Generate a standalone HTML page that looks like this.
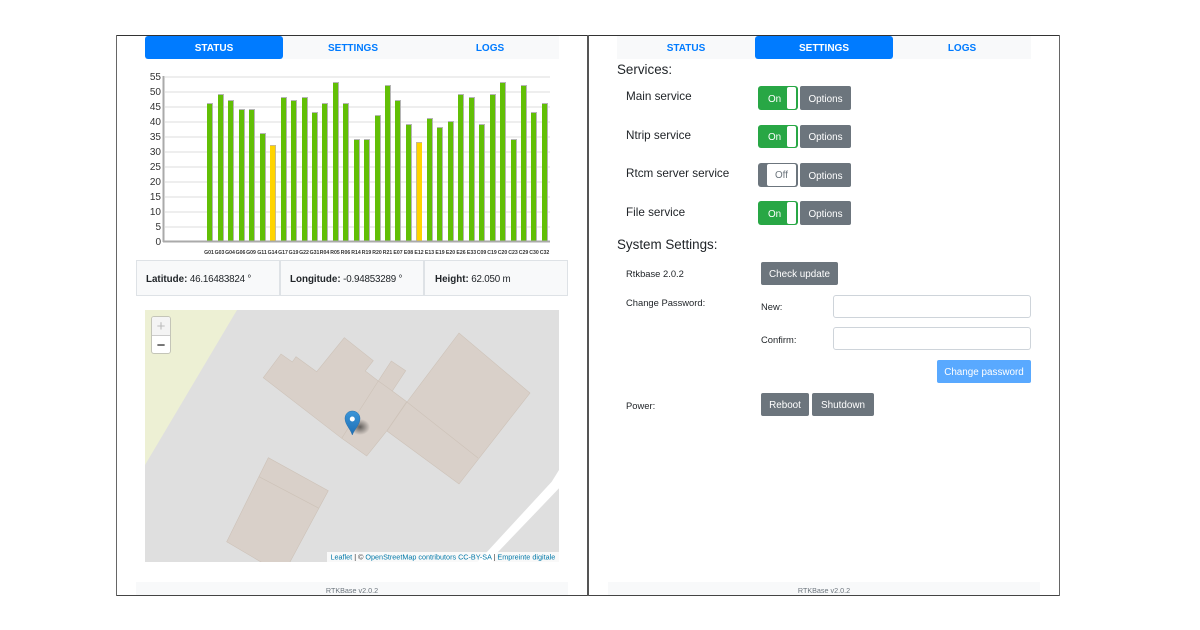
<!DOCTYPE html>
<html><head><meta charset="utf-8"><style>
html,body{margin:0;padding:0;background:#fff;width:1200px;height:630px;overflow:hidden}
body{position:relative;font-family:"Liberation Sans",sans-serif;color:#212529}
.a{position:absolute;white-space:nowrap}
.tab{position:absolute;top:36px;height:23px;line-height:25px;text-align:center;font-size:10px;font-weight:bold;color:#007bff}
.on{background:#007bff;color:#fff;border-radius:3px}
.btn{position:absolute;background:#6c757d;color:#fff;font-size:9.9px;text-align:center;border-radius:2px;height:23px;line-height:25px;overflow:hidden}
.lab{position:absolute;font-size:11.7px;white-space:nowrap;line-height:14px;color:#212529}
.sm{position:absolute;font-size:9.4px;white-space:nowrap;line-height:12px;color:#212529}
.h{position:absolute;font-size:13.4px;white-space:nowrap;line-height:16px;color:#212529}
.tg{position:absolute;left:758px;width:40px;height:24px;background:#28a745;border-radius:3px;color:#fff;font-size:9.9px;line-height:27px;overflow:hidden}
.tg i{position:absolute;left:29px;top:1px;width:9px;height:22px;background:#fff;border-radius:2px}
.tg span{position:absolute;left:10px;top:0}
.inp{position:absolute;left:833px;width:196px;height:21px;border:1px solid #ced4da;border-radius:3px;background:#fff}
.cell{position:absolute;top:260px;height:34px;line-height:37px;background:#f8f9fa;border:1px solid #dee2e6;font-size:9.8px;white-space:nowrap;width:142px;letter-spacing:-.2px}
.cell b{margin-left:9px;letter-spacing:0}
.foot{position:absolute;top:582px;height:13px;background:#f8f9fa;font-size:7.2px;line-height:17px;text-align:center;color:#6c757d;width:432px;overflow:hidden}
</style></head><body>

<!-- frame lines -->
<div class="a" style="left:116px;top:35px;width:944px;height:1px;background:#333"></div>
<div class="a" style="left:116px;top:595px;width:944px;height:1px;background:#444"></div>
<div class="a" style="left:116px;top:35px;width:1px;height:561px;background:#666"></div>
<div class="a" style="left:587px;top:35px;width:2px;height:561px;background:#555"></div>
<div class="a" style="left:1059px;top:35px;width:1px;height:561px;background:#666"></div>

<!-- left tabs -->
<div class="a" style="left:145px;top:36px;width:414px;height:23px;background:#f8f9fa"></div>
<div class="tab on" style="left:145px;width:138px">STATUS</div>
<div class="tab" style="left:283px;width:140px">SETTINGS</div>
<div class="tab" style="left:421px;width:138px">LOGS</div>

<!-- chart -->
<svg class="a" style="left:136px;top:66px" width="432" height="194" viewBox="136 66 432 194">
<g stroke="#eeeeee" stroke-width="2">
<path d="M165 77H550M165 92H550M165 107H550M165 122H550M165 137H550M165 152H550M165 167H550M165 182H550M165 197H550M165 212H550M165 227H550"/>
</g>
<g font-family="Liberation Sans,sans-serif" font-size="10" fill="#333" text-anchor="end">
<text x="161" y="80">55</text><text x="161" y="95">50</text><text x="161" y="110">45</text><text x="161" y="125">40</text><text x="161" y="140">35</text><text x="161" y="155">30</text><text x="161" y="170">25</text><text x="161" y="185">20</text><text x="161" y="200">15</text><text x="161" y="215">10</text><text x="161" y="230">5</text><text x="161" y="245">0</text>
</g>
<g>
<rect x="207" y="103" width="6" height="138" fill="#b5b5b5"/><rect x="207" y="104" width="5" height="137" fill="#62bf06"/>
<rect x="218" y="94" width="6" height="147" fill="#b5b5b5"/><rect x="218" y="95" width="5" height="146" fill="#62bf06"/>
<rect x="228" y="100" width="6" height="141" fill="#b5b5b5"/><rect x="228" y="101" width="5" height="140" fill="#62bf06"/>
<rect x="239" y="109" width="6" height="132" fill="#b5b5b5"/><rect x="239" y="110" width="5" height="131" fill="#62bf06"/>
<rect x="249" y="109" width="6" height="132" fill="#b5b5b5"/><rect x="249" y="110" width="5" height="131" fill="#62bf06"/>
<rect x="260" y="133" width="6" height="108" fill="#b5b5b5"/><rect x="260" y="134" width="5" height="107" fill="#62bf06"/>
<rect x="270" y="145" width="6" height="96" fill="#c9b98a"/><rect x="270" y="146" width="5" height="95" fill="#ffd400"/>
<rect x="281" y="97" width="6" height="144" fill="#b5b5b5"/><rect x="281" y="98" width="5" height="143" fill="#62bf06"/>
<rect x="291" y="100" width="6" height="141" fill="#b5b5b5"/><rect x="291" y="101" width="5" height="140" fill="#62bf06"/>
<rect x="302" y="97" width="6" height="144" fill="#b5b5b5"/><rect x="302" y="98" width="5" height="143" fill="#62bf06"/>
<rect x="312" y="112" width="6" height="129" fill="#b5b5b5"/><rect x="312" y="113" width="5" height="128" fill="#62bf06"/>
<rect x="322" y="103" width="6" height="138" fill="#b5b5b5"/><rect x="322" y="104" width="5" height="137" fill="#62bf06"/>
<rect x="333" y="82" width="6" height="159" fill="#b5b5b5"/><rect x="333" y="83" width="5" height="158" fill="#62bf06"/>
<rect x="343" y="103" width="6" height="138" fill="#b5b5b5"/><rect x="343" y="104" width="5" height="137" fill="#62bf06"/>
<rect x="354" y="139" width="6" height="102" fill="#b5b5b5"/><rect x="354" y="140" width="5" height="101" fill="#62bf06"/>
<rect x="364" y="139" width="6" height="102" fill="#b5b5b5"/><rect x="364" y="140" width="5" height="101" fill="#62bf06"/>
<rect x="375" y="115" width="6" height="126" fill="#b5b5b5"/><rect x="375" y="116" width="5" height="125" fill="#62bf06"/>
<rect x="385" y="85" width="6" height="156" fill="#b5b5b5"/><rect x="385" y="86" width="5" height="155" fill="#62bf06"/>
<rect x="395" y="100" width="6" height="141" fill="#b5b5b5"/><rect x="395" y="101" width="5" height="140" fill="#62bf06"/>
<rect x="406" y="124" width="6" height="117" fill="#b5b5b5"/><rect x="406" y="125" width="5" height="116" fill="#62bf06"/>
<rect x="416" y="142" width="6" height="99" fill="#c9b98a"/><rect x="417" y="143" width="5" height="98" fill="#ffd400"/>
<rect x="427" y="118" width="6" height="123" fill="#b5b5b5"/><rect x="427" y="119" width="5" height="122" fill="#62bf06"/>
<rect x="437" y="127" width="6" height="114" fill="#b5b5b5"/><rect x="437" y="128" width="5" height="113" fill="#62bf06"/>
<rect x="448" y="121" width="6" height="120" fill="#b5b5b5"/><rect x="448" y="122" width="5" height="119" fill="#62bf06"/>
<rect x="458" y="94" width="6" height="147" fill="#b5b5b5"/><rect x="458" y="95" width="5" height="146" fill="#62bf06"/>
<rect x="469" y="97" width="6" height="144" fill="#b5b5b5"/><rect x="469" y="98" width="5" height="143" fill="#62bf06"/>
<rect x="479" y="124" width="6" height="117" fill="#b5b5b5"/><rect x="479" y="125" width="5" height="116" fill="#62bf06"/>
<rect x="490" y="94" width="6" height="147" fill="#b5b5b5"/><rect x="490" y="95" width="5" height="146" fill="#62bf06"/>
<rect x="500" y="82" width="6" height="159" fill="#b5b5b5"/><rect x="500" y="83" width="5" height="158" fill="#62bf06"/>
<rect x="511" y="139" width="6" height="102" fill="#b5b5b5"/><rect x="511" y="140" width="5" height="101" fill="#62bf06"/>
<rect x="521" y="85" width="6" height="156" fill="#b5b5b5"/><rect x="521" y="86" width="5" height="155" fill="#62bf06"/>
<rect x="531" y="112" width="6" height="129" fill="#b5b5b5"/><rect x="531" y="113" width="5" height="128" fill="#62bf06"/>
<rect x="542" y="103" width="6" height="138" fill="#b5b5b5"/><rect x="542" y="104" width="5" height="137" fill="#62bf06"/>
</g>
<path d="M163.500 76V242M163 241.500H550" stroke="#aaaaaa" stroke-width="2" fill="none"/>
<g font-family="Liberation Sans,sans-serif" font-size="5.200" fill="#333" text-anchor="middle" font-weight="bold">
<text x="209" y="254">G01</text><text x="219.500" y="254">G03</text><text x="230" y="254">G04</text><text x="240.500" y="254">G06</text><text x="251" y="254">G09</text><text x="262" y="254">G11</text><text x="272.500" y="254">G14</text><text x="283" y="254">G17</text><text x="293.500" y="254">G19</text><text x="304" y="254">G22</text><text x="314.500" y="254">G31</text><text x="324.500" y="254">R04</text><text x="335" y="254">R05</text><text x="345.500" y="254">R06</text><text x="356" y="254">R14</text><text x="366.500" y="254">R19</text><text x="377" y="254">R20</text><text x="387.500" y="254">R21</text><text x="398" y="254">E07</text><text x="408.500" y="254">E08</text><text x="419" y="254">E12</text><text x="429.500" y="254">E13</text><text x="440" y="254">E19</text><text x="450.500" y="254">E20</text><text x="461" y="254">E26</text><text x="471.500" y="254">E33</text><text x="481.500" y="254">C09</text><text x="492" y="254">C19</text><text x="502.500" y="254">C20</text><text x="513" y="254">C23</text><text x="523.500" y="254">C29</text><text x="534" y="254">C30</text><text x="544.500" y="254">C32</text>
</g>
</svg>

<!-- position cells -->
<div class="cell" style="left:136px"><b>Latitude:</b> 46.16483824 °</div>
<div class="cell" style="left:280px"><b>Longitude:</b> -0.94853289 °</div>
<div class="cell" style="left:424px"><b style="margin-left:10px">Height:</b> 62.050 m</div>

<!-- map -->
<svg class="a" style="left:145px;top:310px" width="414" height="252" viewBox="145 310 414 252">
<defs><radialGradient id="sh"><stop offset="0" stop-color="#000" stop-opacity=".55"/><stop offset="1" stop-color="#000" stop-opacity="0"/></radialGradient>
<linearGradient id="pin" x1="0" y1="0" x2="0" y2="1"><stop offset="0" stop-color="#3b95d8"/><stop offset="1" stop-color="#1f6fb5"/></linearGradient></defs>
<rect x="145" y="310" width="414" height="252" fill="#dfdfdf"/>
<path d="M145 310H237L145 465Z" fill="#edf0d4"/>
<g fill="#d9d0c9" stroke="#cdc2b8" stroke-width=".6">
<path d="M263.300 377.700L281 354L292.300 362L296 356.700L316.700 371.700L344.300 337.700L373.300 360.700L365.300 371L378.300 381L391.300 361L405.700 370.700L392.300 391L406.700 401.700L386.700 431L366.700 456L341.700 438.300Z"/>
<path d="M407 402L459 333L530 393L459 484L387 431Z"/>
<path d="M268.300 457.700L328.300 490.700L283 575L226.700 541.700Z"/>
<path d="M378.300 381L341.700 438.300M378.300 381L392.300 391M407 402L478 458M259 476.700L319 508.300" fill="none"/>
</g>
<path d="M559 470L551.700 481.700L486 553L468 572H487L498 552L559 488.300Z" fill="#fff"/>
<ellipse cx="360" cy="427" rx="10" ry="8" fill="url(#sh)"/>
<path d="M352.300 435C350.500 429 345 424.500 345 418.500C345 414 348.300 411 352.300 411C356.300 411 360 414 360 418.500C360 424.500 354.500 429 352.300 435Z" fill="url(#pin)" stroke="#2a6fa8" stroke-width=".5"/>
<circle cx="352.300" cy="419" r="2.500" fill="#fff"/>
<rect x="327" y="552" width="232" height="10" fill="#fff" fill-opacity=".8"/>
<text x="330.500" y="559.700" font-family="Liberation Sans,sans-serif" font-size="7.230" fill="#0078a8">Leaflet <tspan fill="#333">| © </tspan>OpenStreetMap contributors CC-BY-SA <tspan fill="#333">| </tspan>Empreinte digitale</text>
</svg>

<!-- zoom control -->
<div class="a" style="left:151px;top:316px;width:18px;height:36px;border:1px solid #c4c5b8;border-radius:3px;background:#fff;overflow:hidden">
<div style="height:18px;background:#f4f4f4;border-bottom:1px solid #ccc;color:#bbb;font:normal 15px/19px 'Liberation Sans',sans-serif;text-align:center">+</div>
<div style="height:17px;color:#000;font:normal 15px/20px 'Liberation Sans',sans-serif;text-align:center">−</div>
</div>

<div class="foot" style="left:136px">RTKBase v2.0.2</div>

<!-- right tabs -->
<div class="a" style="left:617px;top:36px;width:414px;height:23px;background:#f8f9fa"></div>
<div class="tab" style="left:617px;width:138px">STATUS</div>
<div class="tab on" style="left:755px;width:138px">SETTINGS</div>
<div class="tab" style="left:893px;width:138px">LOGS</div>

<div class="h" style="left:617px;top:62px">Services:</div>
<div class="lab" style="left:626px;top:90px">Main service</div>
<div class="lab" style="left:626px;top:129px">Ntrip service</div>
<div class="lab" style="left:626px;top:167px">Rtcm server service</div>
<div class="lab" style="left:626px;top:206px">File service</div>

<div class="tg" style="top:86px"><span>On</span><i></i></div>
<div class="tg" style="top:125px;height:23px;line-height:25px"><span>On</span><i style="height:21px"></i></div>
<div class="tg" style="top:163px;background:#6c757d"><i style="left:9px;width:29px;color:#6c757d;text-align:center;font-style:normal;line-height:24px">Off</i></div>
<div class="tg" style="top:201px"><span>On</span><i></i></div>

<div class="btn" style="left:800px;top:86px;width:51px;height:24px;line-height:27px">Options</div>
<div class="btn" style="left:800px;top:125px;width:51px">Options</div>
<div class="btn" style="left:800px;top:163px;width:51px;height:24px;line-height:27px">Options</div>
<div class="btn" style="left:800px;top:201px;width:51px;height:24px;line-height:27px">Options</div>

<div class="h" style="left:617px;top:237px">System Settings:</div>
<div class="sm" style="left:626px;top:268px">Rtkbase 2.0.2</div>
<div class="btn" style="left:761px;top:262px;width:77px">Check update</div>
<div class="sm" style="left:626px;top:297px">Change Password:</div>
<div class="sm" style="left:761px;top:301px">New:</div>
<div class="inp" style="top:295px"></div>
<div class="sm" style="left:761px;top:334px">Confirm:</div>
<div class="inp" style="top:327px"></div>
<div class="btn" style="left:937px;top:360px;width:94px;background:#59a9ff">Change password</div>
<div class="sm" style="left:626px;top:400px">Power:</div>
<div class="btn" style="left:761px;top:393px;width:48px">Reboot</div>
<div class="btn" style="left:812px;top:393px;width:62px">Shutdown</div>

<div class="foot" style="left:608px">RTKBase v2.0.2</div>
</body></html>
